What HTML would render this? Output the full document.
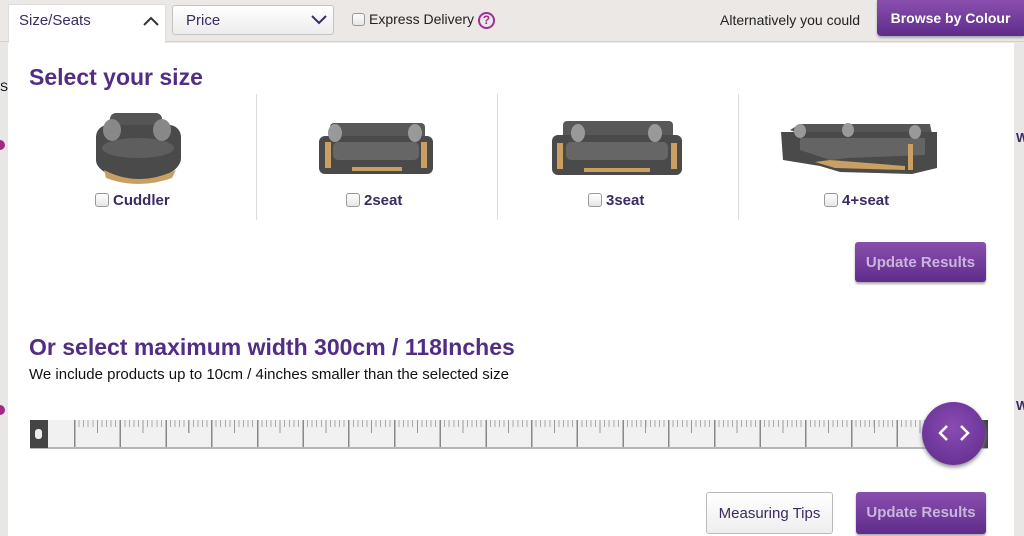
<!DOCTYPE html>
<html><head><style>
*{margin:0;padding:0;box-sizing:border-box}
body{width:1024px;height:536px;overflow:hidden;background:#e9e7e6;font-family:"Liberation Sans",sans-serif;position:relative}
.abs{position:absolute}
.bar{left:0;top:0;width:1024px;height:42px;background:#ebe8e6;border-bottom:1px solid #d4d0ce}
.tab{left:8px;top:4px;width:158px;height:40px;background:#fff;border:1px solid #ddd;border-bottom:none;font-size:15px;color:#3b2a63;padding:7px 0 0 10px}
.price{left:172px;top:5px;width:162px;height:30px;background:linear-gradient(#fff,#ececec);border:1px solid #c5c2c2;border-radius:3px;font-size:15px;color:#3b2a63;padding:6px 0 0 13px}
.panel{left:8px;top:43px;width:1006px;height:493px;background:#fff}
h2{position:absolute;color:#512d84;font-weight:bold;font-size:23px}
.cb{display:inline-block;width:14px;height:14px;border:1px solid #999;border-radius:3px;background:linear-gradient(#fff,#e6e6e6);vertical-align:-2px;margin-right:4px}
.lbl{font-weight:bold;font-size:15px;color:#3b2a63;text-align:center}
.sep{width:1px;background:#dcdcdc;top:94px;height:126px}
.btn{background:linear-gradient(#8a4fae,#5e2c8b);color:#c9b6dc;font-weight:bold;font-size:15px;border-radius:3px;text-align:center;box-shadow:0 2px 2px #aaa}
.ruler{left:30px;top:420px;width:958px;height:29px;background:#f1f1f1;border-bottom:2px solid #b6b6b6;
background-image:repeating-linear-gradient(90deg,#888 0 1.5px,transparent 1.5px 45.7px),repeating-linear-gradient(90deg,#999 0 1px,transparent 1px 22.85px),repeating-linear-gradient(90deg,#aaa 0 1px,transparent 1px 4.57px);
background-size:100% 100%,100% 13px,100% 7px;background-repeat:no-repeat;background-position:44px 0,44px 0,44px 0}
</style></head><body>
<div class="abs bar"></div>
<div class="abs tab">Size/Seats
<svg class="abs" style="left:134px;top:11px" width="16" height="10"><path d="M1 9 L8 2 L15 9" stroke="#333" stroke-width="2" fill="none"/></svg></div>
<div class="abs price">Price<svg class="abs" style="left:138px;top:9px" width="16" height="10"><path d="M1 1 L8 8 L15 1" stroke="#3b2a63" stroke-width="2" fill="none"/></svg></div>
<div class="abs" style="left:352px;top:11px;font-size:14px;color:#222"><span class="cb" style="width:13px;height:13px"></span>Express Delivery <span style="display:inline-block;width:17px;height:17px;border:2px solid #a0308f;border-radius:50%;color:#a0308f;font-size:12px;font-weight:bold;text-align:center;line-height:13px">?</span></div>
<div class="abs" style="left:720px;top:12px;font-size:14px;color:#222">Alternatively you could</div>
<div class="abs btn" style="left:877px;top:0;width:147px;height:36px;padding-top:10px;color:#fff;font-size:14px;border-radius:0 0 0 4px">Browse by Colour</div>
<div class="abs" style="left:0;top:80px;font-size:12px">S</div>
<div class="abs" style="left:0;top:140px;width:5px;height:10px;background:#a02a86;border-radius:0 5px 5px 0"></div>
<div class="abs" style="left:0;top:405px;width:5px;height:10px;background:#a02a86;border-radius:0 5px 5px 0"></div>
<div class="abs" style="left:1016px;top:130px;font-size:13px;color:#3b2a63;font-weight:bold">W</div>
<div class="abs" style="left:1016px;top:398px;font-size:13px;color:#3b2a63;font-weight:bold">W</div>
<div class="abs panel"></div>
<h2 style="left:29px;top:64px">Select your size</h2>
<div class="abs sep" style="left:256px"></div><div class="abs sep" style="left:497px"></div><div class="abs sep" style="left:738px"></div>
<svg class="abs" style="left:0;top:100px" width="1000" height="90">
<g fill="#4a4a4a">
<rect x="110" y="13" width="52" height="30" rx="6" fill="#555"/>
<ellipse cx="138" cy="60" rx="42" ry="20"/>
<rect x="96" y="25" width="85" height="45" rx="12"/>
<ellipse cx="138" cy="48" rx="36" ry="10" fill="#5e5e5e"/>
<path d="M104 70 Q138 88 176 70 L172 78 Q138 90 106 78Z" fill="#c9a062"/>
<ellipse cx="112" cy="30" rx="9" ry="11" fill="#888"/><ellipse cx="162" cy="30" rx="9" ry="11" fill="#888"/>
<rect x="330" y="23" width="95" height="25" rx="4" fill="#585858"/>
<rect x="319" y="36" width="114" height="38" rx="6"/>
<rect x="333" y="42" width="86" height="18" rx="5" fill="#666"/>
<rect x="325" y="42" width="6" height="26" fill="#c9a062"/><rect x="421" y="42" width="6" height="26" fill="#c9a062"/>
<rect x="352" y="67" width="50" height="4" fill="#c9a062"/>
<rect x="563" y="21" width="110" height="27" rx="4" fill="#585858"/>
<rect x="552" y="35" width="130" height="40" rx="6"/>
<rect x="566" y="42" width="102" height="18" rx="5" fill="#666"/>
<rect x="557" y="43" width="6" height="26" fill="#c9a062"/><rect x="671" y="43" width="6" height="26" fill="#c9a062"/>
<rect x="584" y="68" width="66" height="4" fill="#c9a062"/>
<path d="M790 30 L800 24 L930 24 L932 34 L800 34Z" fill="#555"/>
<path d="M781 32 L937 32 L937 68 L912 74 L840 72 L820 66 L783 60Z"/>
<path d="M800 38 L925 38 L925 55 L848 58 L830 60 L800 50Z" fill="#646464"/>
<path d="M815 62 L830 60 L905 66 L905 70 L835 68Z" fill="#c9a062"/><rect x="908" y="44" width="5" height="26" fill="#c9a062"/>
<ellipse cx="335" cy="33" rx="7" ry="9" fill="#999"/><ellipse cx="415" cy="33" rx="7" ry="9" fill="#999"/>
<ellipse cx="578" cy="33" rx="7" ry="9" fill="#999"/><ellipse cx="655" cy="33" rx="7" ry="9" fill="#999"/>
<ellipse cx="800" cy="31" rx="6" ry="7" fill="#999"/><ellipse cx="848" cy="30" rx="6" ry="7" fill="#999"/><ellipse cx="915" cy="32" rx="6" ry="7" fill="#999"/>
</g></svg>
<div class="abs lbl" style="left:95px;top:192px"><span class="cb"></span>Cuddler</div>
<div class="abs lbl" style="left:346px;top:192px"><span class="cb"></span>2seat</div>
<div class="abs lbl" style="left:588px;top:192px"><span class="cb"></span>3seat</div>
<div class="abs lbl" style="left:824px;top:192px"><span class="cb"></span>4+seat</div>
<div class="abs btn" style="left:855px;top:242px;width:131px;height:40px;padding-top:12px">Update Results</div>
<h2 style="left:29px;top:334px">Or select maximum width 300cm / 118Inches</h2>
<div class="abs" style="left:29px;top:366px;font-size:15px;color:#111">We include products up to 10cm / 4inches smaller than the selected size</div>
<div class="abs ruler"></div>
<div class="abs" style="left:30px;top:420px;width:18px;height:28px;background:#444"><div class="abs" style="left:5px;top:9px;width:7px;height:10px;background:#eee;border-radius:3px"></div></div>
<div class="abs" style="left:978px;top:420px;width:10px;height:28px;background:#444"></div>
<div class="abs" style="left:922px;top:402px;width:63px;height:63px;border-radius:50%;background:radial-gradient(circle at 50% 40%,#8a4cb4,#5d2a8a);box-shadow:0 2px 4px #888;color:#fff;font-size:22px;text-align:center;line-height:60px">
<svg width="40" height="20" style="margin-top:21px"><path d="M13 3 L6 10 L13 17 M27 3 L34 10 L27 17" stroke="#fff" stroke-width="2.5" fill="none"/></svg></div>
<div class="abs" style="left:706px;top:492px;width:127px;height:42px;border:1px solid #bbb;border-radius:3px;background:linear-gradient(#fff,#eee);font-size:15px;color:#3b2a63;text-align:center;padding-top:12px">Measuring Tips</div>
<div class="abs btn" style="left:856px;top:492px;width:130px;height:42px;padding-top:12px">Update Results</div>
</body></html>
